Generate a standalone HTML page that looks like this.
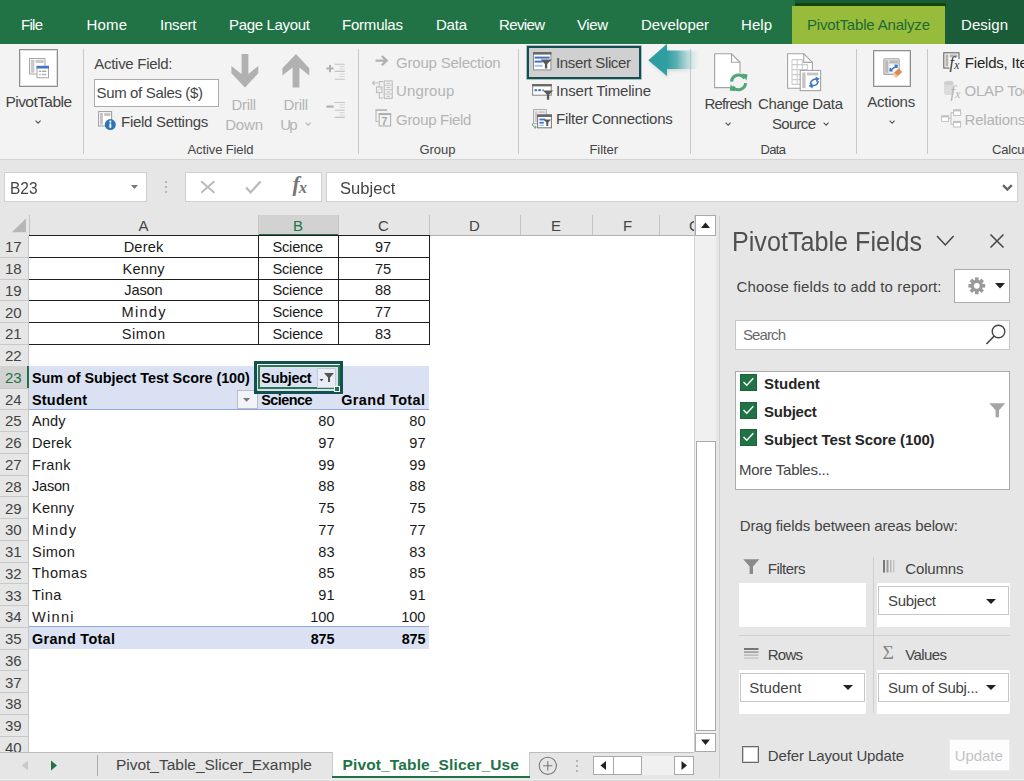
<!DOCTYPE html>
<html lang="en"><head><meta charset="utf-8"><title>Excel PivotTable Slicer</title>
<style>
html,body{margin:0;padding:0}
body{width:1024px;height:781px;overflow:hidden;position:relative;background:#e6e6e6;font-family:"Liberation Sans",sans-serif}
#app{position:absolute;left:0;top:0;width:1024px;height:781px;overflow:hidden}
#app div,#app svg{position:absolute;box-sizing:border-box}
.t{white-space:nowrap}
</style></head><body><div id="app">
<div style="left:0px;top:0px;width:1024px;height:44px;background:#217346;"></div>
<div style="left:945px;top:0px;width:79px;height:44px;background:#1a5c38;"></div>
<div style="left:795px;top:0px;width:150px;height:3px;background:#1a5c38;"></div>
<div style="left:795px;top:2.5px;width:150.5px;height:4px;background:#13430f;"></div>
<div style="left:792px;top:6px;width:153px;height:38px;background:#97bb3a;"></div>
<div class="t" style="left:21.00px;top:17.10px;font-size:15px;line-height:15px;color:#ffffff;letter-spacing:-0.723px;">File</div>
<div class="t" style="left:86.50px;top:17.10px;font-size:15px;line-height:15px;color:#ffffff;letter-spacing:0.162px;">Home</div>
<div class="t" style="left:160.00px;top:17.10px;font-size:15px;line-height:15px;color:#ffffff;letter-spacing:-0.203px;">Insert</div>
<div class="t" style="left:229.00px;top:17.10px;font-size:15px;line-height:15px;color:#ffffff;letter-spacing:-0.324px;">Page Layout</div>
<div class="t" style="left:342.00px;top:17.10px;font-size:15px;line-height:15px;color:#ffffff;letter-spacing:-0.216px;">Formulas</div>
<div class="t" style="left:436.00px;top:17.10px;font-size:15px;line-height:15px;color:#ffffff;letter-spacing:-0.228px;">Data</div>
<div class="t" style="left:499.00px;top:17.10px;font-size:15px;line-height:15px;color:#ffffff;letter-spacing:-0.636px;">Review</div>
<div class="t" style="left:577.00px;top:17.10px;font-size:15px;line-height:15px;color:#ffffff;letter-spacing:-0.414px;">View</div>
<div class="t" style="left:641.00px;top:17.10px;font-size:15px;line-height:15px;color:#ffffff;letter-spacing:-0.047px;">Developer</div>
<div class="t" style="left:741.00px;top:17.10px;font-size:15px;line-height:15px;color:#ffffff;letter-spacing:0.050px;">Help</div>
<div class="t" style="left:807.00px;top:17.10px;font-size:15px;line-height:15px;color:#1e6a36;letter-spacing:-0.171px;">PivotTable Analyze</div>
<div class="t" style="left:961.00px;top:17.10px;font-size:15px;line-height:15px;color:#ffffff;letter-spacing:0.062px;">Design</div>
<div style="left:0px;top:44px;width:1024px;height:115px;background:#f3f3f3;"></div>
<div style="left:0px;top:159px;width:1024px;height:1px;background:#d4d4d4;"></div>
<div style="left:83px;top:49px;width:1px;height:105px;background:#c9c9c9;"></div>
<div style="left:358px;top:49px;width:1px;height:105px;background:#c9c9c9;"></div>
<div style="left:518px;top:49px;width:1px;height:105px;background:#c9c9c9;"></div>
<div style="left:690px;top:49px;width:1px;height:105px;background:#c9c9c9;"></div>
<div style="left:856px;top:49px;width:1px;height:105px;background:#c9c9c9;"></div>
<div style="left:927px;top:49px;width:1px;height:105px;background:#c9c9c9;"></div>
<div style="left:19px;top:49px;width:39px;height:38px;background:#ffffff;border:1px solid #8f8f8f;box-shadow:inset 0 0 0 1px #dedede;"></div>
<div class="t" style="left:5.50px;top:93.88px;font-size:15.5px;line-height:15.5px;color:#444444;letter-spacing:-0.557px;">PivotTable</div>
<svg style="left:35.2px;top:119.6px;" width="7" height="4" viewBox="0 0 7 4"><path d="M0.6 0.6 L3.1 3.1 L5.6 0.6" fill="none" stroke="#555" stroke-width="1.1"/></svg>
<div class="t" style="left:94.30px;top:55.70px;font-size:15px;line-height:15px;color:#444444;letter-spacing:-0.291px;">Active Field:</div>
<div style="left:93.5px;top:79px;width:125px;height:27.5px;background:#ffffff;border:1px solid #ababab;"></div>
<div class="t" style="left:96.50px;top:85.30px;font-size:15px;line-height:15px;color:#444444;letter-spacing:-0.347px;">Sum of Sales ($)</div>
<div class="t" style="left:121.00px;top:113.80px;font-size:15px;line-height:15px;color:#444444;letter-spacing:-0.275px;">Field Settings</div>
<div class="t" style="left:187.50px;top:142.50px;font-size:13px;line-height:13px;color:#444444;letter-spacing:-0.108px;">Active Field</div>
<div class="t" style="left:231.60px;top:96.60px;font-size:15px;line-height:15px;color:#b3b3b3;letter-spacing:-0.306px;">Drill</div>
<div class="t" style="left:225.20px;top:116.50px;font-size:15px;line-height:15px;color:#b3b3b3;letter-spacing:-0.183px;">Down</div>
<div class="t" style="left:283.60px;top:96.60px;font-size:15px;line-height:15px;color:#b3b3b3;letter-spacing:-0.306px;">Drill</div>
<div class="t" style="left:280.20px;top:116.50px;font-size:15px;line-height:15px;color:#b3b3b3;letter-spacing:-1.675px;">Up</div>
<svg style="left:304.5px;top:122px;" width="7" height="4" viewBox="0 0 7 4"><path d="M0.6 0.6 L3.1 3.1 L5.6 0.6" fill="none" stroke="#b3b3b3" stroke-width="1.1"/></svg>
<div class="t" style="left:396.10px;top:54.90px;font-size:15px;line-height:15px;color:#b3b3b3;letter-spacing:-0.219px;">Group Selection</div>
<div class="t" style="left:396.10px;top:83.10px;font-size:15px;line-height:15px;color:#b3b3b3;letter-spacing:0.110px;">Ungroup</div>
<div class="t" style="left:396.10px;top:112.10px;font-size:15px;line-height:15px;color:#b3b3b3;letter-spacing:-0.317px;">Group Field</div>
<div class="t" style="left:419.40px;top:142.50px;font-size:13px;line-height:13px;color:#444444;letter-spacing:0.017px;">Group</div>
<div style="left:526.5px;top:45.5px;width:114.5px;height:33px;background:#d0d0d0;border:2px solid #134f50;box-shadow:0 0 0 0.6px rgba(19,79,80,.55);"></div>
<div class="t" style="left:556.00px;top:54.80px;font-size:15px;line-height:15px;color:#444444;letter-spacing:-0.349px;">Insert Slicer</div>
<div class="t" style="left:556.00px;top:83.30px;font-size:15px;line-height:15px;color:#444444;letter-spacing:-0.181px;">Insert Timeline</div>
<div class="t" style="left:556.00px;top:111.40px;font-size:15px;line-height:15px;color:#444444;letter-spacing:-0.240px;">Filter Connections</div>
<div class="t" style="left:589.50px;top:142.50px;font-size:13px;line-height:13px;color:#444444;letter-spacing:-0.078px;">Filter</div>
<div class="t" style="left:704.50px;top:96.30px;font-size:15px;line-height:15px;color:#444444;letter-spacing:-0.837px;">Refresh</div>
<svg style="left:724.5px;top:122px;" width="7" height="4" viewBox="0 0 7 4"><path d="M0.6 0.6 L3.1 3.1 L5.6 0.6" fill="none" stroke="#555" stroke-width="1.1"/></svg>
<div class="t" style="left:758.00px;top:96.30px;font-size:15px;line-height:15px;color:#444444;letter-spacing:-0.340px;">Change Data</div>
<div class="t" style="left:772.00px;top:116.30px;font-size:15px;line-height:15px;color:#444444;letter-spacing:-0.705px;">Source</div>
<svg style="left:823px;top:122px;" width="7" height="4" viewBox="0 0 7 4"><path d="M0.6 0.6 L3.1 3.1 L5.6 0.6" fill="none" stroke="#555" stroke-width="1.1"/></svg>
<div class="t" style="left:760.50px;top:142.50px;font-size:13px;line-height:13px;color:#444444;letter-spacing:-0.653px;">Data</div>
<div style="left:872.5px;top:49.5px;width:38.5px;height:37.5px;background:#ffffff;border:1px solid #8f8f8f;box-shadow:inset 0 0 0 1px #dedede;"></div>
<div class="t" style="left:867.20px;top:94.10px;font-size:15px;line-height:15px;color:#444444;letter-spacing:-0.182px;">Actions</div>
<svg style="left:888.6px;top:119.5px;" width="7" height="4" viewBox="0 0 7 4"><path d="M0.6 0.6 L3.1 3.1 L5.6 0.6" fill="none" stroke="#555" stroke-width="1.1"/></svg>
<div class="t" style="left:964.80px;top:54.90px;font-size:15px;line-height:15px;color:#262626;letter-spacing:-0.200px;">Fields, Items, &amp; Sets</div>
<div class="t" style="left:964.50px;top:83.30px;font-size:15px;line-height:15px;color:#b3b3b3;letter-spacing:-0.200px;">OLAP Tools</div>
<div class="t" style="left:964.50px;top:111.80px;font-size:15px;line-height:15px;color:#b3b3b3;letter-spacing:-0.200px;">Relationships</div>
<div class="t" style="left:992.00px;top:142.50px;font-size:13px;line-height:13px;color:#444444;letter-spacing:-0.200px;">Calculations</div>
<div style="left:4px;top:172px;width:143px;height:30px;background:#ffffff;border:1px solid #d0d0d0;"></div>
<div class="t" style="left:10.20px;top:179.80px;font-size:16.3px;line-height:16.3px;color:#444444;letter-spacing:0.000px;transform:scaleX(0.9516);transform-origin:0 0;">B23</div>
<svg style="left:131px;top:185px;" width="8" height="5" viewBox="0 0 8 5"><path d="M0 0 L7 0 L3.5 4 Z" fill="#777"/></svg>
<div style="left:164.5px;top:181px;width:2px;height:2px;background:#b5b5b5;"></div>
<div style="left:164.5px;top:186px;width:2px;height:2px;background:#b5b5b5;"></div>
<div style="left:164.5px;top:191px;width:2px;height:2px;background:#b5b5b5;"></div>
<div style="left:185px;top:172px;width:136.5px;height:30px;background:#ffffff;border:1px solid #d0d0d0;"></div>
<svg style="left:200px;top:180.3px;" width="16" height="14" viewBox="0 0 16 14"><path d="M1.2 1.2 L14.4 12.8 M14.4 1.2 L1.2 12.8" stroke="#b9b9b9" stroke-width="1.9" fill="none"/></svg>
<svg style="left:245.4px;top:180.3px;" width="18" height="14" viewBox="0 0 18 14"><path d="M1.2 7.6 L5.6 12.4 L15.6 1.4" stroke="#b9b9b9" stroke-width="2.2" fill="none"/></svg>
<div class="t" style="left:292.40px;top:174.00px;font-size:21.5px;line-height:21.5px;color:#757575;letter-spacing:0.000px;font-family:'Liberation Serif',serif;font-weight:700;font-style:italic;">f</div>
<div class="t" style="left:298.80px;top:180.23px;font-size:16.5px;line-height:16.5px;color:#757575;letter-spacing:0.000px;font-family:'Liberation Serif',serif;font-weight:700;font-style:italic;">x</div>
<div style="left:326px;top:172px;width:692px;height:30px;background:#ffffff;border:1px solid #d0d0d0;"></div>
<div class="t" style="left:339.60px;top:179.80px;font-size:16.3px;line-height:16.3px;color:#444444;letter-spacing:0.000px;transform:scaleX(1.0190);transform-origin:0 0;">Subject</div>
<svg style="left:1001.6px;top:184.3px;" width="11" height="8" viewBox="0 0 11 8"><path d="M1 1.2 L5.4 5.6 L9.8 1.2" fill="none" stroke="#666" stroke-width="2.4"/></svg>
<div style="left:29px;top:236px;width:664.5px;height:516px;background:#ffffff;"></div>
<div style="left:0px;top:215px;width:694px;height:21px;background:#e6e6e6;"></div>
<div style="left:0px;top:236px;width:29px;height:516px;background:#e6e6e6;"></div>
<div style="left:258px;top:215px;width:80px;height:21px;background:#d2d2d2;"></div>
<div style="left:258px;top:234px;width:80px;height:2px;background:#217346;"></div>
<div style="left:28.5px;top:215px;width:1px;height:20px;background:#c4c4c4;"></div>
<div style="left:257.5px;top:215px;width:1px;height:20px;background:#c4c4c4;"></div>
<div style="left:337.5px;top:215px;width:1px;height:20px;background:#c4c4c4;"></div>
<div style="left:428.5px;top:215px;width:1px;height:20px;background:#c4c4c4;"></div>
<div style="left:519.5px;top:215px;width:1px;height:20px;background:#c4c4c4;"></div>
<div style="left:591.5px;top:215px;width:1px;height:20px;background:#c4c4c4;"></div>
<div style="left:658.5px;top:215px;width:1px;height:20px;background:#c4c4c4;"></div>
<div style="left:29px;top:235px;width:664.5px;height:1px;background:#b2b2b2;"></div>
<svg style="left:11px;top:218px;" width="16" height="15" viewBox="0 0 16 15"><path d="M15 0.5 L15 14.3 L0.8 14.3 Z" fill="#b7b7b7"/></svg>
<div class="t" style="left:138.50px;top:217.90px;font-size:15px;line-height:15px;color:#444444;letter-spacing:0.000px;">A</div>
<div class="t" style="left:293.00px;top:217.90px;font-size:15px;line-height:15px;color:#217346;letter-spacing:0.000px;">B</div>
<div class="t" style="left:378.08px;top:217.90px;font-size:15px;line-height:15px;color:#444444;letter-spacing:0.000px;">C</div>
<div class="t" style="left:469.08px;top:217.90px;font-size:15px;line-height:15px;color:#444444;letter-spacing:0.000px;">D</div>
<div class="t" style="left:551.00px;top:217.90px;font-size:15px;line-height:15px;color:#444444;letter-spacing:0.000px;">E</div>
<div class="t" style="left:622.92px;top:217.90px;font-size:15px;line-height:15px;color:#444444;letter-spacing:0.000px;">F</div>
<div class="t" style="left:689.00px;top:217.90px;font-size:15px;line-height:15px;color:#444444;letter-spacing:0.000px;width:4.5px;overflow:hidden;">G</div>
<div style="left:28px;top:236px;width:1px;height:516px;background:#c4c4c4;"></div>
<div style="left:0px;top:256.96px;width:29px;height:1px;background:#c9c9c9;"></div>
<div class="t" style="left:5.12px;top:239.40px;font-size:15px;line-height:15px;color:#444444;letter-spacing:-0.100px;">17</div>
<div style="left:0px;top:278.71999999999997px;width:29px;height:1px;background:#c9c9c9;"></div>
<div class="t" style="left:5.12px;top:261.16px;font-size:15px;line-height:15px;color:#444444;letter-spacing:-0.100px;">18</div>
<div style="left:0px;top:300.47999999999996px;width:29px;height:1px;background:#c9c9c9;"></div>
<div class="t" style="left:5.12px;top:282.92px;font-size:15px;line-height:15px;color:#444444;letter-spacing:-0.100px;">19</div>
<div style="left:0px;top:322.24px;width:29px;height:1px;background:#c9c9c9;"></div>
<div class="t" style="left:5.12px;top:304.68px;font-size:15px;line-height:15px;color:#444444;letter-spacing:-0.100px;">20</div>
<div style="left:0px;top:344.0px;width:29px;height:1px;background:#c9c9c9;"></div>
<div class="t" style="left:5.12px;top:326.44px;font-size:15px;line-height:15px;color:#444444;letter-spacing:-0.100px;">21</div>
<div style="left:0px;top:365.76px;width:29px;height:1px;background:#c9c9c9;"></div>
<div class="t" style="left:5.12px;top:348.20px;font-size:15px;line-height:15px;color:#444444;letter-spacing:-0.100px;">22</div>
<div style="left:0px;top:366.26px;width:29px;height:21.76px;background:#d2d2d2;"></div>
<div style="left:27px;top:366.26px;width:2px;height:21.76px;background:#217346;"></div>
<div style="left:0px;top:387.52px;width:29px;height:1px;background:#c9c9c9;"></div>
<div class="t" style="left:5.12px;top:369.96px;font-size:15px;line-height:15px;color:#217346;letter-spacing:-0.100px;">23</div>
<div style="left:0px;top:409.28px;width:29px;height:1px;background:#c9c9c9;"></div>
<div class="t" style="left:5.12px;top:391.72px;font-size:15px;line-height:15px;color:#444444;letter-spacing:-0.100px;">24</div>
<div style="left:0px;top:431.03999999999996px;width:29px;height:1px;background:#c9c9c9;"></div>
<div class="t" style="left:5.12px;top:413.48px;font-size:15px;line-height:15px;color:#444444;letter-spacing:-0.100px;">25</div>
<div style="left:0px;top:452.79999999999995px;width:29px;height:1px;background:#c9c9c9;"></div>
<div class="t" style="left:5.12px;top:435.24px;font-size:15px;line-height:15px;color:#444444;letter-spacing:-0.100px;">26</div>
<div style="left:0px;top:474.56px;width:29px;height:1px;background:#c9c9c9;"></div>
<div class="t" style="left:5.12px;top:457.00px;font-size:15px;line-height:15px;color:#444444;letter-spacing:-0.100px;">27</div>
<div style="left:0px;top:496.32px;width:29px;height:1px;background:#c9c9c9;"></div>
<div class="t" style="left:5.12px;top:478.76px;font-size:15px;line-height:15px;color:#444444;letter-spacing:-0.100px;">28</div>
<div style="left:0px;top:518.08px;width:29px;height:1px;background:#c9c9c9;"></div>
<div class="t" style="left:5.12px;top:500.52px;font-size:15px;line-height:15px;color:#444444;letter-spacing:-0.100px;">29</div>
<div style="left:0px;top:539.8399999999999px;width:29px;height:1px;background:#c9c9c9;"></div>
<div class="t" style="left:5.12px;top:522.28px;font-size:15px;line-height:15px;color:#444444;letter-spacing:-0.100px;">30</div>
<div style="left:0px;top:561.6px;width:29px;height:1px;background:#c9c9c9;"></div>
<div class="t" style="left:5.12px;top:544.04px;font-size:15px;line-height:15px;color:#444444;letter-spacing:-0.100px;">31</div>
<div style="left:0px;top:583.36px;width:29px;height:1px;background:#c9c9c9;"></div>
<div class="t" style="left:5.12px;top:565.80px;font-size:15px;line-height:15px;color:#444444;letter-spacing:-0.100px;">32</div>
<div style="left:0px;top:605.12px;width:29px;height:1px;background:#c9c9c9;"></div>
<div class="t" style="left:5.12px;top:587.56px;font-size:15px;line-height:15px;color:#444444;letter-spacing:-0.100px;">33</div>
<div style="left:0px;top:626.88px;width:29px;height:1px;background:#c9c9c9;"></div>
<div class="t" style="left:5.12px;top:609.32px;font-size:15px;line-height:15px;color:#444444;letter-spacing:-0.100px;">34</div>
<div style="left:0px;top:648.64px;width:29px;height:1px;background:#c9c9c9;"></div>
<div class="t" style="left:5.12px;top:631.08px;font-size:15px;line-height:15px;color:#444444;letter-spacing:-0.100px;">35</div>
<div style="left:0px;top:670.4000000000001px;width:29px;height:1px;background:#c9c9c9;"></div>
<div class="t" style="left:5.12px;top:652.84px;font-size:15px;line-height:15px;color:#444444;letter-spacing:-0.100px;">36</div>
<div style="left:0px;top:692.1600000000001px;width:29px;height:1px;background:#c9c9c9;"></div>
<div class="t" style="left:5.12px;top:674.60px;font-size:15px;line-height:15px;color:#444444;letter-spacing:-0.100px;">37</div>
<div style="left:0px;top:713.9200000000001px;width:29px;height:1px;background:#c9c9c9;"></div>
<div class="t" style="left:5.12px;top:696.36px;font-size:15px;line-height:15px;color:#444444;letter-spacing:-0.100px;">38</div>
<div style="left:0px;top:735.6800000000001px;width:29px;height:1px;background:#c9c9c9;"></div>
<div class="t" style="left:5.12px;top:718.12px;font-size:15px;line-height:15px;color:#444444;letter-spacing:-0.100px;">39</div>
<div class="t" style="left:5.12px;top:739.88px;font-size:15px;line-height:15px;color:#444444;letter-spacing:-0.100px;">40</div>
<div class="t" style="left:123.65px;top:239.94px;font-size:14.6px;line-height:14.6px;color:#1a1a1a;letter-spacing:0.189px;">Derek</div>
<div class="t" style="left:272.50px;top:239.94px;font-size:14.6px;line-height:14.6px;color:#1a1a1a;letter-spacing:-0.207px;">Science</div>
<div class="t" style="left:375.00px;top:239.94px;font-size:14.6px;line-height:14.6px;color:#1a1a1a;letter-spacing:-0.240px;">97</div>
<div class="t" style="left:122.50px;top:261.70px;font-size:14.6px;line-height:14.6px;color:#1a1a1a;letter-spacing:0.151px;">Kenny</div>
<div class="t" style="left:272.50px;top:261.70px;font-size:14.6px;line-height:14.6px;color:#1a1a1a;letter-spacing:-0.207px;">Science</div>
<div class="t" style="left:375.00px;top:261.70px;font-size:14.6px;line-height:14.6px;color:#1a1a1a;letter-spacing:-0.240px;">75</div>
<div class="t" style="left:124.25px;top:283.46px;font-size:14.6px;line-height:14.6px;color:#1a1a1a;letter-spacing:-0.115px;">Jason</div>
<div class="t" style="left:272.50px;top:283.46px;font-size:14.6px;line-height:14.6px;color:#1a1a1a;letter-spacing:-0.207px;">Science</div>
<div class="t" style="left:375.00px;top:283.46px;font-size:14.6px;line-height:14.6px;color:#1a1a1a;letter-spacing:-0.240px;">88</div>
<div class="t" style="left:121.50px;top:305.22px;font-size:14.6px;line-height:14.6px;color:#1a1a1a;letter-spacing:1.264px;">Mindy</div>
<div class="t" style="left:272.50px;top:305.22px;font-size:14.6px;line-height:14.6px;color:#1a1a1a;letter-spacing:-0.207px;">Science</div>
<div class="t" style="left:375.00px;top:305.22px;font-size:14.6px;line-height:14.6px;color:#1a1a1a;letter-spacing:-0.240px;">77</div>
<div class="t" style="left:121.75px;top:326.98px;font-size:14.6px;line-height:14.6px;color:#1a1a1a;letter-spacing:0.529px;">Simon</div>
<div class="t" style="left:272.50px;top:326.98px;font-size:14.6px;line-height:14.6px;color:#1a1a1a;letter-spacing:-0.207px;">Science</div>
<div class="t" style="left:375.00px;top:326.98px;font-size:14.6px;line-height:14.6px;color:#1a1a1a;letter-spacing:-0.240px;">83</div>
<div style="left:29px;top:235px;width:400.5px;height:1px;background:#1f1f1f;"></div>
<div style="left:29px;top:257px;width:400.5px;height:1px;background:#1f1f1f;"></div>
<div style="left:29px;top:279px;width:400.5px;height:1px;background:#1f1f1f;"></div>
<div style="left:29px;top:300px;width:400.5px;height:1px;background:#1f1f1f;"></div>
<div style="left:29px;top:322px;width:400.5px;height:1px;background:#1f1f1f;"></div>
<div style="left:29px;top:344px;width:400.5px;height:1px;background:#1f1f1f;"></div>
<div style="left:257.5px;top:235px;width:1px;height:110px;background:#1f1f1f;"></div>
<div style="left:337.5px;top:235px;width:1px;height:110px;background:#1f1f1f;"></div>
<div style="left:428.5px;top:235px;width:1px;height:110px;background:#1f1f1f;"></div>
<div style="left:29px;top:366.26px;width:400px;height:43.52px;background:#d9e1f2;"></div>
<div style="left:29px;top:627.38px;width:400px;height:21.76px;background:#d9e1f2;"></div>
<div style="left:29px;top:408.78px;width:400px;height:1px;background:#8ea9db;"></div>
<div style="left:29px;top:626.38px;width:400px;height:1px;background:#8ea9db;"></div>
<div class="t" style="left:32.00px;top:370.97px;font-size:14.4px;line-height:14.4px;color:#000;letter-spacing:-0.033px;font-weight:700;">Sum of Subject Test Score (100)</div>
<div class="t" style="left:32.00px;top:392.73px;font-size:14.4px;line-height:14.4px;color:#000;letter-spacing:0.235px;font-weight:700;">Student</div>
<div class="t" style="left:261.30px;top:392.73px;font-size:14.4px;line-height:14.4px;color:#000;letter-spacing:-0.539px;font-weight:700;">Science</div>
<div class="t" style="left:341.20px;top:392.73px;font-size:14.4px;line-height:14.4px;color:#000;letter-spacing:0.407px;font-weight:700;">Grand Total</div>
<div class="t" style="left:32.00px;top:414.02px;font-size:14.6px;line-height:14.6px;color:#1a1a1a;letter-spacing:0.074px;">Andy</div>
<div class="t" style="left:318.36px;top:414.02px;font-size:14.6px;line-height:14.6px;color:#1a1a1a;letter-spacing:-0.100px;">80</div>
<div class="t" style="left:409.36px;top:414.02px;font-size:14.6px;line-height:14.6px;color:#1a1a1a;letter-spacing:-0.100px;">80</div>
<div class="t" style="left:32.00px;top:435.78px;font-size:14.6px;line-height:14.6px;color:#1a1a1a;letter-spacing:0.139px;">Derek</div>
<div class="t" style="left:318.36px;top:435.78px;font-size:14.6px;line-height:14.6px;color:#1a1a1a;letter-spacing:-0.100px;">97</div>
<div class="t" style="left:409.36px;top:435.78px;font-size:14.6px;line-height:14.6px;color:#1a1a1a;letter-spacing:-0.100px;">97</div>
<div class="t" style="left:32.00px;top:457.54px;font-size:14.6px;line-height:14.6px;color:#1a1a1a;letter-spacing:0.295px;">Frank</div>
<div class="t" style="left:318.36px;top:457.54px;font-size:14.6px;line-height:14.6px;color:#1a1a1a;letter-spacing:-0.100px;">99</div>
<div class="t" style="left:409.36px;top:457.54px;font-size:14.6px;line-height:14.6px;color:#1a1a1a;letter-spacing:-0.100px;">99</div>
<div class="t" style="left:32.00px;top:479.30px;font-size:14.6px;line-height:14.6px;color:#1a1a1a;letter-spacing:-0.240px;">Jason</div>
<div class="t" style="left:318.36px;top:479.30px;font-size:14.6px;line-height:14.6px;color:#1a1a1a;letter-spacing:-0.100px;">88</div>
<div class="t" style="left:409.36px;top:479.30px;font-size:14.6px;line-height:14.6px;color:#1a1a1a;letter-spacing:-0.100px;">88</div>
<div class="t" style="left:32.00px;top:501.06px;font-size:14.6px;line-height:14.6px;color:#1a1a1a;letter-spacing:0.151px;">Kenny</div>
<div class="t" style="left:318.36px;top:501.06px;font-size:14.6px;line-height:14.6px;color:#1a1a1a;letter-spacing:-0.100px;">75</div>
<div class="t" style="left:409.36px;top:501.06px;font-size:14.6px;line-height:14.6px;color:#1a1a1a;letter-spacing:-0.100px;">75</div>
<div class="t" style="left:32.00px;top:522.82px;font-size:14.6px;line-height:14.6px;color:#1a1a1a;letter-spacing:1.264px;">Mindy</div>
<div class="t" style="left:318.36px;top:522.82px;font-size:14.6px;line-height:14.6px;color:#1a1a1a;letter-spacing:-0.100px;">77</div>
<div class="t" style="left:409.36px;top:522.82px;font-size:14.6px;line-height:14.6px;color:#1a1a1a;letter-spacing:-0.100px;">77</div>
<div class="t" style="left:32.00px;top:544.58px;font-size:14.6px;line-height:14.6px;color:#1a1a1a;letter-spacing:0.404px;">Simon</div>
<div class="t" style="left:318.36px;top:544.58px;font-size:14.6px;line-height:14.6px;color:#1a1a1a;letter-spacing:-0.100px;">83</div>
<div class="t" style="left:409.36px;top:544.58px;font-size:14.6px;line-height:14.6px;color:#1a1a1a;letter-spacing:-0.100px;">83</div>
<div class="t" style="left:32.00px;top:566.34px;font-size:14.6px;line-height:14.6px;color:#1a1a1a;letter-spacing:0.452px;">Thomas</div>
<div class="t" style="left:318.36px;top:566.34px;font-size:14.6px;line-height:14.6px;color:#1a1a1a;letter-spacing:-0.100px;">85</div>
<div class="t" style="left:409.36px;top:566.34px;font-size:14.6px;line-height:14.6px;color:#1a1a1a;letter-spacing:-0.100px;">85</div>
<div class="t" style="left:32.00px;top:588.10px;font-size:14.6px;line-height:14.6px;color:#1a1a1a;letter-spacing:0.547px;">Tina</div>
<div class="t" style="left:318.36px;top:588.10px;font-size:14.6px;line-height:14.6px;color:#1a1a1a;letter-spacing:-0.100px;">91</div>
<div class="t" style="left:409.36px;top:588.10px;font-size:14.6px;line-height:14.6px;color:#1a1a1a;letter-spacing:-0.100px;">91</div>
<div class="t" style="left:32.00px;top:609.86px;font-size:14.6px;line-height:14.6px;color:#1a1a1a;letter-spacing:1.248px;">Winni</div>
<div class="t" style="left:310.34px;top:609.86px;font-size:14.6px;line-height:14.6px;color:#1a1a1a;letter-spacing:-0.100px;">100</div>
<div class="t" style="left:401.34px;top:609.86px;font-size:14.6px;line-height:14.6px;color:#1a1a1a;letter-spacing:-0.100px;">100</div>
<div class="t" style="left:32.00px;top:632.09px;font-size:14.4px;line-height:14.4px;color:#000;letter-spacing:0.327px;font-weight:700;">Grand Total</div>
<div class="t" style="left:310.67px;top:632.09px;font-size:14.4px;line-height:14.4px;color:#000;letter-spacing:-0.100px;font-weight:700;">875</div>
<div class="t" style="left:401.67px;top:632.09px;font-size:14.4px;line-height:14.4px;color:#000;letter-spacing:-0.100px;font-weight:700;">875</div>
<div style="left:237px;top:389.52px;width:20.5px;height:19.26px;background:#f2f4fa;border:1px solid #b9bdc9;"></div>
<svg style="left:243.3px;top:397.62px;" width="8" height="5" viewBox="0 0 8 5"><path d="M0 0 L7.2 0 L3.6 3.8 Z" fill="#777"/></svg>
<div style="left:253.5px;top:360.5px;width:89.5px;height:33px;border:3px solid #14504e;"></div>
<div style="left:257.5px;top:365px;width:82px;height:24px;border:2px solid #2b7a4f;"></div>
<div class="t" style="left:261.30px;top:370.97px;font-size:14.4px;line-height:14.4px;color:#000;letter-spacing:-0.268px;font-weight:700;">Subject</div>
<div style="left:316.5px;top:368px;width:19px;height:19.5px;background:#e9edf7;border:1px solid #c5cbd8;"></div>
<svg style="left:319px;top:372px;" width="16" height="12" viewBox="0 0 16 12"><path d="M5 1 L15 1 L11 5.5 L11 10 L9 10 L9 5.5 Z" fill="#555"/><path d="M0.5 7 L4.5 7 L2.5 9.5 Z" fill="#555"/></svg>
<div style="left:334px;top:386px;width:6px;height:6px;background:#217346;border:1px solid #fff;"></div>
<div style="left:693.5px;top:215px;width:1px;height:537px;background:#d0d0d0;"></div>
<div style="left:694.5px;top:215px;width:25px;height:537px;background:#e6e6e6;"></div>
<div style="left:695px;top:236px;width:21px;height:497px;background:#f0f0f0;"></div>
<div style="left:695px;top:215px;width:21px;height:21px;background:#ffffff;border:1px solid #a9a9a9;"></div>
<svg style="left:701px;top:222px;" width="10" height="7" viewBox="0 0 10 7"><path d="M0 6 L9 6 L4.5 0.5 Z" fill="#222"/></svg>
<div style="left:695.5px;top:441px;width:20px;height:290px;background:#ffffff;border:1px solid #a9a9a9;"></div>
<div style="left:695px;top:732.5px;width:21px;height:19.5px;background:#ffffff;border:1px solid #a9a9a9;"></div>
<svg style="left:701px;top:739px;" width="10" height="7" viewBox="0 0 10 7"><path d="M0 0.5 L9 0.5 L4.5 6 Z" fill="#222"/></svg>
<div style="left:0px;top:752px;width:720px;height:29px;background:#e6e6e6;"></div>
<div style="left:0px;top:751.5px;width:694px;height:1px;background:#bdbdbd;"></div>
<svg style="left:21px;top:760px;" width="8" height="11" viewBox="0 0 8 11"><path d="M7 0.5 L7 10.5 L1 5.5 Z" fill="#c8c8c8"/></svg>
<svg style="left:50px;top:760px;" width="8" height="11" viewBox="0 0 8 11"><path d="M1 0.5 L1 10.5 L7 5.5 Z" fill="#217346"/></svg>
<div style="left:97px;top:755px;width:1px;height:21px;background:#ababab;"></div>
<div class="t" style="left:116.00px;top:756.88px;font-size:15.5px;line-height:15.5px;color:#444444;letter-spacing:-0.018px;">Pivot_Table_Slicer_Example</div>
<div style="left:332px;top:752px;width:197.5px;height:24px;background:#ffffff;"></div>
<div style="left:332px;top:775.5px;width:197.5px;height:2px;background:#217346;"></div>
<div style="left:331.5px;top:752px;width:1px;height:24px;background:#c9c9c9;"></div>
<div style="left:529px;top:752px;width:1px;height:24px;background:#c9c9c9;"></div>
<div class="t" style="left:342.60px;top:757.18px;font-size:15.5px;line-height:15.5px;color:#217346;letter-spacing:0.126px;font-weight:700;">Pivot_Table_Slicer_Use</div>
<svg style="left:538px;top:756px;" width="20" height="20" viewBox="0 0 20 20"><circle cx="9.8" cy="9.8" r="8.6" fill="none" stroke="#777" stroke-width="1.1"/><path d="M9.8 5.2 V14.4 M5.2 9.8 H14.4" stroke="#777" stroke-width="1.1"/></svg>
<div style="left:576px;top:759.5px;width:2px;height:2px;background:#b5b5b5;"></div>
<div style="left:576px;top:764.5px;width:2px;height:2px;background:#b5b5b5;"></div>
<div style="left:576px;top:769.5px;width:2px;height:2px;background:#b5b5b5;"></div>
<div style="left:593px;top:755.5px;width:100.5px;height:19px;background:#f0f0f0;"></div>
<div style="left:593px;top:755.5px;width:20.5px;height:19.5px;background:#ffffff;border:1px solid #a9a9a9;"></div>
<svg style="left:599.5px;top:760.5px;" width="7" height="9" viewBox="0 0 7 9"><path d="M6 0 L6 9 L0.5 4.5 Z" fill="#222"/></svg>
<div style="left:613px;top:755.5px;width:28.5px;height:19.5px;background:#ffffff;border:1px solid #a9a9a9;"></div>
<div style="left:673.5px;top:755.5px;width:20.5px;height:19.5px;background:#ffffff;border:1px solid #a9a9a9;"></div>
<svg style="left:680.5px;top:760.5px;" width="7" height="9" viewBox="0 0 7 9"><path d="M0.5 0 L0.5 9 L6 4.5 Z" fill="#222"/></svg>
<div style="left:0px;top:778.5px;width:1024px;height:2px;background:#efefef;"></div>
<div style="left:0px;top:780px;width:1024px;height:1px;background:#dcdcdc;"></div>
<div style="left:718.5px;top:216px;width:1px;height:562px;background:#cfcfcf;"></div>
<div class="t" style="left:732.40px;top:226.56px;font-size:28.4px;line-height:28.4px;color:#505050;letter-spacing:0.000px;transform:scaleX(0.8860);transform-origin:0 0;">PivotTable Fields</div>
<svg style="left:936px;top:235px;" width="19" height="12" viewBox="0 0 19 12"><path d="M1 1 L9.3 10 L17.6 1" fill="none" stroke="#444" stroke-width="1.5"/></svg>
<svg style="left:989px;top:233px;" width="16" height="16" viewBox="0 0 16 16"><path d="M1.5 1.5 L14.5 14.5 M14.5 1.5 L1.5 14.5" fill="none" stroke="#444" stroke-width="1.5"/></svg>
<div class="t" style="left:736.50px;top:279.00px;font-size:15px;line-height:15px;color:#444444;letter-spacing:0.135px;">Choose fields to add to report:</div>
<div style="left:954px;top:269px;width:56px;height:34px;background:#ffffff;border:1px solid #ababab;"></div>
<svg style="left:994.5px;top:283px;" width="11" height="7" viewBox="0 0 11 7"><path d="M0 0 L10 0 L5 5.5 Z" fill="#222"/></svg>
<div style="left:735px;top:319.5px;width:275px;height:30px;background:#ffffff;border:1px solid #c6c6c6;"></div>
<div class="t" style="left:743.00px;top:327.10px;font-size:15px;line-height:15px;color:#6a6a6a;letter-spacing:-0.905px;">Search</div>
<svg style="left:985px;top:323px;" width="23" height="23" viewBox="0 0 23 23"><circle cx="13.5" cy="8.5" r="6.3" fill="none" stroke="#444" stroke-width="1.4"/><path d="M9.2 13 L1.5 21" stroke="#444" stroke-width="1.6"/></svg>
<div style="left:735px;top:371px;width:275px;height:118.5px;background:#ffffff;border:1px solid #ababab;"></div>
<div style="left:740px;top:374px;width:17px;height:17px;background:#217346;border:1px solid #1b6339;"></div>
<svg style="left:742.2px;top:377.4px;" width="13" height="10" viewBox="0 0 13 10"><path d="M1.5 5 L4.8 8.3 L11.3 1.3" fill="none" stroke="#fff" stroke-width="1.3"/></svg>
<div class="t" style="left:764.00px;top:376.30px;font-size:15px;line-height:15px;color:#262626;letter-spacing:-0.004px;font-weight:700;">Student</div>
<div style="left:740px;top:402px;width:17px;height:17px;background:#217346;border:1px solid #1b6339;"></div>
<svg style="left:742.2px;top:405.4px;" width="13" height="10" viewBox="0 0 13 10"><path d="M1.5 5 L4.8 8.3 L11.3 1.3" fill="none" stroke="#fff" stroke-width="1.3"/></svg>
<div class="t" style="left:764.00px;top:404.10px;font-size:15px;line-height:15px;color:#262626;letter-spacing:-0.230px;font-weight:700;">Subject</div>
<div style="left:740px;top:429px;width:17px;height:17px;background:#217346;border:1px solid #1b6339;"></div>
<svg style="left:742.2px;top:432.4px;" width="13" height="10" viewBox="0 0 13 10"><path d="M1.5 5 L4.8 8.3 L11.3 1.3" fill="none" stroke="#fff" stroke-width="1.3"/></svg>
<div class="t" style="left:764.00px;top:431.90px;font-size:15px;line-height:15px;color:#262626;letter-spacing:-0.109px;font-weight:700;">Subject Test Score (100)</div>
<div class="t" style="left:739.00px;top:462.10px;font-size:15px;line-height:15px;color:#444444;letter-spacing:-0.249px;">More Tables...</div>
<svg style="left:989px;top:402.5px;" width="17" height="15" viewBox="0 0 17 15"><path d="M0.3 0.3 L16.3 0.3 L10 7.3 L10 14.3 L6.6 14.3 L6.6 7.3 Z" fill="#a6a6a6"/></svg>
<div class="t" style="left:739.70px;top:517.70px;font-size:15px;line-height:15px;color:#444444;letter-spacing:-0.113px;">Drag fields between areas below:</div>
<svg style="left:742.5px;top:559px;" width="17" height="16" viewBox="0 0 17 16"><path d="M0.3 0.3 L16.3 0.3 L10 7.5 L10 15 L6.6 15 L6.6 7.5 Z" fill="#8a8a8a"/></svg>
<div class="t" style="left:767.80px;top:561.10px;font-size:15px;line-height:15px;color:#444444;letter-spacing:-0.505px;">Filters</div>
<div class="t" style="left:905.30px;top:561.10px;font-size:15px;line-height:15px;color:#444444;letter-spacing:-0.165px;">Columns</div>
<div class="t" style="left:767.80px;top:647.30px;font-size:15px;line-height:15px;color:#444444;letter-spacing:-0.769px;">Rows</div>
<div class="t" style="left:905.30px;top:647.30px;font-size:15px;line-height:15px;color:#444444;letter-spacing:-0.610px;">Values</div>
<svg style="left:883px;top:560px;" width="13" height="13" viewBox="0 0 13 13"><rect x="0" y="0" width="2" height="12.5" fill="#777"/><rect x="3.5" y="0" width="2" height="12.5" fill="#999"/><rect x="7" y="0" width="1.5" height="12.5" fill="#b5b5b5"/><rect x="10" y="0" width="1.5" height="12.5" fill="#c5c5c5"/></svg>
<svg style="left:743.5px;top:647.5px;" width="15" height="12" viewBox="0 0 15 12"><rect x="0" y="0" width="14.5" height="2" fill="#777"/><rect x="0" y="3.3" width="14.5" height="1.6" fill="#999"/><rect x="0" y="6.4" width="14.5" height="1.4" fill="#b5b5b5"/><rect x="0" y="9.4" width="14.5" height="1.4" fill="#c5c5c5"/></svg>
<div class="t" style="left:882.60px;top:642.69px;font-size:19.5px;line-height:19.5px;color:#858585;letter-spacing:0.000px;font-family:'Liberation Serif',serif;">Σ</div>
<div style="left:738.6px;top:583px;width:127.5px;height:43.5px;background:#ffffff;"></div>
<div style="left:876.5px;top:583px;width:133.3px;height:43.5px;background:#ffffff;"></div>
<div style="left:738.6px;top:670px;width:127.5px;height:43.5px;background:#ffffff;"></div>
<div style="left:876.5px;top:670px;width:133.3px;height:43.5px;background:#ffffff;"></div>
<div style="left:873px;top:557px;width:1px;height:156px;background:#cfcfcf;"></div>
<div style="left:738.6px;top:634.5px;width:271.2px;height:1px;background:#cfcfcf;"></div>
<div style="left:877.6px;top:586px;width:131.2px;height:29px;background:#ffffff;border:1px solid #c6c6c6;"></div>
<div class="t" style="left:888.00px;top:593.10px;font-size:15px;line-height:15px;color:#444444;letter-spacing:-0.339px;">Subject</div>
<svg style="left:986px;top:598.5px;" width="11" height="6" viewBox="0 0 11 6"><path d="M0 0 L10 0 L5 5 Z" fill="#222"/></svg>
<div style="left:739.8px;top:673px;width:125.3px;height:29px;background:#ffffff;border:1px solid #c6c6c6;"></div>
<div class="t" style="left:749.30px;top:680.30px;font-size:15px;line-height:15px;color:#444444;letter-spacing:0.048px;">Student</div>
<svg style="left:842.5px;top:685px;" width="11" height="6" viewBox="0 0 11 6"><path d="M0 0 L10 0 L5 5 Z" fill="#222"/></svg>
<div style="left:877.6px;top:673px;width:131.2px;height:29px;background:#ffffff;border:1px solid #c6c6c6;"></div>
<div class="t" style="left:888.00px;top:680.30px;font-size:15px;line-height:15px;color:#444444;letter-spacing:-0.286px;">Sum of Subj...</div>
<svg style="left:986px;top:685px;" width="11" height="6" viewBox="0 0 11 6"><path d="M0 0 L10 0 L5 5 Z" fill="#222"/></svg>
<div style="left:742px;top:746px;width:17px;height:17px;background:#ffffff;border:1px solid #6a6a6a;box-shadow:inset 0 0 0 1px #d0d0d0;"></div>
<div class="t" style="left:767.80px;top:747.80px;font-size:15px;line-height:15px;color:#444444;letter-spacing:-0.112px;">Defer Layout Update</div>
<div style="left:948.5px;top:738.5px;width:61.3px;height:32px;background:#fdfdfd;border:1px solid #ececec;"></div>
<div class="t" style="left:954.70px;top:747.80px;font-size:15px;line-height:15px;color:#c3c3c3;letter-spacing:-0.054px;">Update</div>
<svg style="left:29px;top:58px;" width="20" height="21" viewBox="0 0 20 21">
<rect x="0.5" y="0.5" width="15.5" height="15.5" fill="#fff" stroke="#a6a6a6"/>
<rect x="1.8" y="1.8" width="3.6" height="12.9" fill="#c9c9c9"/>
<rect x="6.6" y="1.8" width="8.2" height="3.2" fill="#c9c9c9"/>
<rect x="8" y="8.3" width="11.5" height="11.5" fill="#fff" stroke="#a6a6a6"/>
<rect x="7.6" y="7.9" width="12.3" height="2.6" fill="#4472c4"/>
<rect x="10.2" y="12.6" width="1.6" height="1.4" fill="#8c8c8c"/><rect x="12.8" y="12.6" width="4.6" height="1.4" fill="#a8a8a8"/>
<rect x="10.2" y="15.8" width="1.6" height="1.4" fill="#b5b5b5"/><rect x="12.8" y="15.8" width="4.6" height="1.4" fill="#b5b5b5"/>
</svg>
<svg style="left:98px;top:110.5px;" width="19" height="20" viewBox="0 0 19 20">
<rect x="0.6" y="0.6" width="13" height="14.4" fill="#fff" stroke="#a0a0a0" stroke-width="1.1"/>
<rect x="2" y="2" width="3" height="11.6" fill="#c4c4c4"/>
<rect x="6.2" y="2" width="6.2" height="3" fill="#c4c4c4"/>
<circle cx="12.3" cy="13.6" r="5.5" fill="#2e75b6"/>
<rect x="11.4" y="12.4" width="1.9" height="4.4" fill="#fff"/><circle cx="12.35" cy="10.6" r="1.1" fill="#fff"/>
</svg>
<svg style="left:230.5px;top:54.3px;" width="28" height="34" viewBox="0 0 28 34"><path d="M10.6 0 H17.4 V20 L27.3 12.0 V19.2 L14 33.4 L0.4 19.2 V12.0 L10.6 20 Z" fill="#b1b1b1"/></svg>
<svg style="left:282.3px;top:54.3px;" width="28" height="34" viewBox="0 0 28 34"><path d="M10.6 33.4 H17.4 V13.4 L27.3 21.4 V14.2 L14 0 L0.4 14.2 V21.4 L10.6 13.4 Z" fill="#b1b1b1"/></svg>
<svg style="left:326px;top:62px;" width="20" height="19" viewBox="0 0 20 19">
<path d="M0.4 6.6 H7.6 M4 3 V10.2" stroke="#b1b1b1" stroke-width="2" fill="none"/>
<path d="M8.6 2.2 H18.8 M8.6 9.4 H18.8 M8.6 17.2 H18.8" stroke="#c4c4c4" stroke-width="1.1"/>
<path d="M13.5 4.6 H18.8 M13.5 7 H18.8 M13.5 12 H18.8 M13.5 14.6 H18.8" stroke="#d6d6d6" stroke-width="1"/>
</svg>
<svg style="left:326px;top:100px;" width="20" height="19" viewBox="0 0 20 19">
<path d="M0.4 6.6 H7.6" stroke="#b1b1b1" stroke-width="2.2" fill="none"/>
<path d="M8.6 2.5 H18.8 M8.6 10.2 H18.8 M8.6 17.4 H18.8" stroke="#c4c4c4" stroke-width="1.1"/>
<path d="M13.5 5 H18.8 M13.5 7.6 H18.8 M13.5 12.6 H18.8 M13.5 15 H18.8" stroke="#d6d6d6" stroke-width="1"/>
</svg>
<svg style="left:375px;top:55px;" width="14" height="12" viewBox="0 0 14 12"><path d="M0.5 5.6 H10.5 M6.8 1 L11.8 5.6 L6.8 10.2" stroke="#b1b1b1" stroke-width="2.3" fill="none"/></svg>
<svg style="left:372px;top:80px;" width="22" height="20" viewBox="0 0 22 20">
<rect x="12.2" y="1" width="8" height="17.4" fill="none" stroke="#bcbcbc" stroke-width="1.1"/>
<path d="M12.2 5.3 H20.2 M12.2 9.7 H20.2 M12.2 14 H20.2" stroke="#c8c8c8" stroke-width="1"/>
<path d="M14.6 3.3 H18 M14.6 7.6 H18 M14.6 12 H18 M14.6 16.3 H18" stroke="#bcbcbc" stroke-width="1"/>
<path d="M11 1.6 H7.3 V18 H11" fill="none" stroke="#bcbcbc" stroke-width="1.1"/>
<rect x="4.5" y="7" width="5.4" height="5.6" fill="#f3f3f3" stroke="#bcbcbc" stroke-width="1.1"/>
<path d="M5.6 11.4 L8.8 8.2" stroke="#cfcfcf" stroke-width="1"/>
<path d="M0.6 3 H6 M2.6 0.8 L0.6 3 L2.6 5.2" fill="none" stroke="#bcbcbc" stroke-width="1.1"/>
</svg>
<svg style="left:374.5px;top:108.8px;" width="17" height="18" viewBox="0 0 17 18">
<path d="M1 12.6 V1 H12" fill="none" stroke="#b9b9b9" stroke-width="1.1"/>
<rect x="0.5" y="0.4" width="11.5" height="1.6" fill="#b9b9b9"/>
<rect x="4.2" y="4.6" width="11.4" height="12.4" fill="#f3f3f3" stroke="#b1b1b1" stroke-width="1.1"/>
<rect x="3.7" y="4.1" width="12.4" height="2" fill="#b1b1b1"/>
<path d="M0.6 12.6 H3.5" stroke="#b9b9b9" stroke-width="1"/>
</svg>
<div class="t" style="left:381.60px;top:115.51px;font-size:10.5px;line-height:10.5px;color:#a9a9a9;letter-spacing:0.000px;font-weight:700;">7</div>
<svg style="left:533px;top:52px;" width="19" height="19" viewBox="0 0 19 19">
<rect x="0.5" y="0.5" width="17.4" height="17.4" fill="#fff" stroke="#8c8c8c"/>
<rect x="0" y="0" width="18.4" height="2.6" fill="#6a6a6a"/>
<rect x="1.6" y="4.6" width="15" height="2" fill="#4472c4"/>
<rect x="1.6" y="8.6" width="8" height="2" fill="#4472c4"/>
<rect x="1.6" y="12.8" width="8" height="2" fill="#a9c4e8"/>
<path d="M7.6 7.6 H18.6 L14.3 12 V16.6 H11.9 V12 Z" fill="#595959"/>
</svg>
<svg style="left:640px;top:38px;" width="64" height="46" viewBox="0 0 64 46">
<defs><linearGradient id="tg" gradientUnits="userSpaceOnUse" x1="8" x2="60" y1="0" y2="0"><stop offset="0" stop-color="#2b9b9d"/><stop offset="0.36" stop-color="#2f9fa1"/><stop offset="0.55" stop-color="#43a9ab" stop-opacity="0.85"/><stop offset="0.75" stop-color="#6fbfc0" stop-opacity="0.45"/><stop offset="1" stop-color="#a5d9da" stop-opacity="0"/></linearGradient>
<linearGradient id="tg2" gradientUnits="userSpaceOnUse" x1="8" x2="60" y1="0" y2="0"><stop offset="0" stop-color="#000" stop-opacity="0.16"/><stop offset="0.5" stop-color="#000" stop-opacity="0.12"/><stop offset="0.9" stop-color="#000" stop-opacity="0"/></linearGradient>
<filter id="sh" x="-20%" y="-20%" width="140%" height="150%"><feGaussianBlur stdDeviation="1.5"/></filter></defs>
<path d="M9.5 24 L27.5 8.4 L27.5 14.6 L60 14.6 L60 33 L27.5 33 L27.5 39.4 Z" fill="url(#tg2)" filter="url(#sh)"/>
<path d="M8.3 22.2 L27 5.8 L27 12.6 L60 12.6 L60 31 L27 31 L27 38 Z" fill="url(#tg)"/>
</svg>
<svg style="left:531.5px;top:84px;" width="22" height="17" viewBox="0 0 22 17">
<rect x="0.6" y="0.6" width="18.6" height="10.6" fill="#fff" stroke="#8c8c8c" stroke-width="1.1"/>
<rect x="0" y="0" width="19.8" height="2.4" fill="#6a6a6a"/>
<rect x="2.4" y="5.2" width="2.8" height="2" fill="#4472c4"/><rect x="6.2" y="5.2" width="2.8" height="2" fill="#4472c4"/><rect x="10" y="5.2" width="2" height="2" fill="#8faadc"/>
<path d="M10.8 6.4 H21.2 L17.2 10.6 V15.8 H14.9 V10.6 Z" fill="#595959"/>
</svg>
<svg style="left:531px;top:108.5px;" width="22" height="20" viewBox="0 0 22 20">
<rect x="2.6" y="0.6" width="12.6" height="14" fill="#f8f8f8" stroke="#a6a6a6" stroke-width="1"/>
<rect x="4" y="2.2" width="2.4" height="11" fill="#c9c9c9"/><rect x="7.4" y="2.2" width="6.4" height="2" fill="#c9c9c9"/>
<rect x="6.6" y="6" width="13.8" height="12.8" fill="#fff" stroke="#7f7f7f" stroke-width="1.1"/>
<rect x="6" y="5.4" width="15" height="2.6" fill="#6a6a6a"/>
<rect x="8.4" y="9.6" width="6" height="1.8" fill="#4472c4"/><rect x="8.4" y="12.8" width="4.4" height="1.8" fill="#4472c4"/><rect x="8.4" y="15.6" width="4.4" height="1.4" fill="#a9c4e8"/>
<path d="M12.4 10.6 H20 L17.3 13.6 V17 H15.3 V13.6 Z" fill="#595959"/>
<path d="M1.4 14.6 C1.4 17.4 3 18.6 5 18.4 M3.6 16.8 L5.2 18.4 L3.6 19.8" stroke="#4ea577" stroke-width="1" fill="none"/>
</svg>
<svg style="left:714px;top:52.5px;" width="36" height="42" viewBox="0 0 36 42">
<path d="M0.6 0.8 H17.5 L26 9.3 V34.6 H0.6 Z" fill="#fff" stroke="#a3a3a3" stroke-width="1.1"/>
<path d="M17.5 0.8 V9.3 H26" fill="none" stroke="#a3a3a3" stroke-width="1.1"/>
<circle cx="24.6" cy="29.4" r="9.8" fill="#f3f3f3"/>
<path d="M17.6 28.6 A7.1 7.1 0 0 1 30.6 25.3" fill="none" stroke="#4fa678" stroke-width="3"/>
<path d="M28 20.6 L33.6 21.4 L32.4 27.6 Z" fill="#4fa678"/>
<path d="M31.6 30.2 A7.1 7.1 0 0 1 18.6 33.5" fill="none" stroke="#4fa678" stroke-width="3"/>
<path d="M21.2 38.2 L15.6 37.4 L16.8 31.2 Z" fill="#4fa678"/>
</svg>
<svg style="left:787px;top:53px;" width="35" height="39" viewBox="0 0 35 39">
<path d="M0.6 0.8 H16.8 L25.4 9.4 V35.2 H0.6 Z" fill="#fff" stroke="#a3a3a3" stroke-width="1.1"/>
<path d="M16.8 0.8 V9.4 H25.4" fill="none" stroke="#a3a3a3" stroke-width="1.1"/>
<path d="M5 6.6 H15.4 M5 11.6 H20.6 M5 16.6 H20.6 M5 21.6 H14 M5 26.6 H14 M5 31.4 H14 M5 6.6 V31.4 M10.2 6.6 V31.4 M15.4 6.6 V16.6 M20.6 11.6 V16.6" stroke="#cdcdcd" stroke-width="1.1" fill="none"/>
<rect x="13.2" y="17.4" width="20.4" height="20.2" fill="#fff" stroke="#a3a3a3" stroke-width="1.1"/>
<rect x="15.2" y="19.6" width="3.4" height="15.6" fill="#c4c4c4"/><rect x="20" y="19.6" width="11.4" height="2.8" fill="#c4c4c4"/>
<path d="M23.4 31 C23.6 27.8 26.4 26 29.6 26.2" fill="none" stroke="#3b78c4" stroke-width="1.7"/>
<path d="M28.6 23.4 L32.6 25.8 L29.2 29 Z" fill="#3b78c4"/>
<path d="M31.2 28 C30.8 31.2 28 32.8 24.8 32.6" fill="none" stroke="#3b78c4" stroke-width="1.7"/>
<path d="M25.8 35.4 L21.6 33 L25.2 29.8 Z" fill="#3b78c4"/>
</svg>
<svg style="left:883px;top:57.5px;" width="20" height="21" viewBox="0 0 20 21">
<rect x="0.8" y="0.8" width="15.4" height="15.6" rx="1" fill="#e4e4e4" stroke="#a6a6a6" stroke-width="1.1"/>
<rect x="2.2" y="2.4" width="3" height="12.4" fill="#b9b9b9"/><rect x="6.4" y="2.4" width="8.6" height="3" fill="#b9b9b9"/>
<rect x="6.4" y="6.4" width="9" height="9" fill="#f6f6f6"/>
<path d="M7.2 12.4 L14 7.6 M11.6 7.2 L14.2 7.4 L13.8 10 M9.6 13 L7 12.6 L7.4 10" fill="none" stroke="#3b78c4" stroke-width="1.4"/>
<path d="M9.6 16 L15.6 10.4 L19.2 14 L13 19.8 Z" fill="#dc8a4e"/>
<path d="M9.6 16 L11.4 14.4 L14.8 18 L13 19.8 Z" fill="#f0c9a8"/>
</svg>
<svg style="left:942.5px;top:52px;" width="20" height="20" viewBox="0 0 20 20">
<rect x="0.8" y="0.8" width="15.2" height="15.2" fill="#fff" stroke="#6d6d6d" stroke-width="1.2"/>
<rect x="2.4" y="2.4" width="3" height="12" fill="#b5b5b5"/><rect x="6.6" y="2.4" width="8" height="3" fill="#b5b5b5"/>
<rect x="6.4" y="7" width="12" height="11" fill="#f3f3f3"/>
</svg>
<div class="t" style="left:949.60px;top:55.46px;font-size:16px;line-height:16px;color:#333;letter-spacing:0.000px;font-family:'Liberation Serif',serif;font-style:italic;">f</div>
<div class="t" style="left:954.30px;top:60.47px;font-size:11.5px;line-height:11.5px;color:#333;letter-spacing:0.000px;font-family:'Liberation Serif',serif;font-style:italic;">x</div>
<svg style="left:943px;top:80px;" width="20" height="20" viewBox="0 0 20 20">
<path d="M1 3 V13.4 C1 15.4 10.6 15.4 10.6 13.4 V3" fill="#dcdcdc"/>
<ellipse cx="5.8" cy="3" rx="4.8" ry="2.2" fill="#d0d0d0"/>
</svg>
<div class="t" style="left:950.60px;top:83.86px;font-size:16px;line-height:16px;color:#b5b5b5;letter-spacing:0.000px;font-family:'Liberation Serif',serif;font-style:italic;">f</div>
<div class="t" style="left:955.30px;top:88.87px;font-size:11.5px;line-height:11.5px;color:#b5b5b5;letter-spacing:0.000px;font-family:'Liberation Serif',serif;font-style:italic;">x</div>
<svg style="left:940.5px;top:108.5px;" width="21" height="19" viewBox="0 0 21 19">
<rect x="0.6" y="6.8" width="7" height="5.6" fill="#fff" stroke="#c0c0c0"/><rect x="0.6" y="6.8" width="7" height="1.6" fill="#c0c0c0"/>
<rect x="12.6" y="0.8" width="7" height="5.6" fill="#fff" stroke="#c0c0c0"/><rect x="12.6" y="0.8" width="7" height="1.6" fill="#c0c0c0"/>
<rect x="12.6" y="12.4" width="7" height="5.6" fill="#fff" stroke="#c0c0c0"/><rect x="12.6" y="12.4" width="7" height="1.6" fill="#c0c0c0"/>
<path d="M7.6 9.6 H10 M10 3.6 V15.2 M10 3.6 H12.6 M10 15.2 H12.6" stroke="#c0c0c0" stroke-width="1" fill="none"/>
</svg>
<svg style="left:967.6px;top:277.2px;" width="18" height="18" viewBox="0 0 18 18">
<g fill="#9a9a9a"><circle cx="8.8" cy="8.8" r="6.1"/>
<rect x="7" y="0.4" width="3.6" height="16.8"/><rect x="0.4" y="7" width="16.8" height="3.6"/>
<rect x="7" y="0.4" width="3.6" height="16.8" transform="rotate(45 8.8 8.8)"/><rect x="7" y="0.4" width="3.6" height="16.8" transform="rotate(-45 8.8 8.8)"/></g>
<circle cx="8.8" cy="8.8" r="2.9" fill="#fff"/>
</svg>
</div></body></html>
